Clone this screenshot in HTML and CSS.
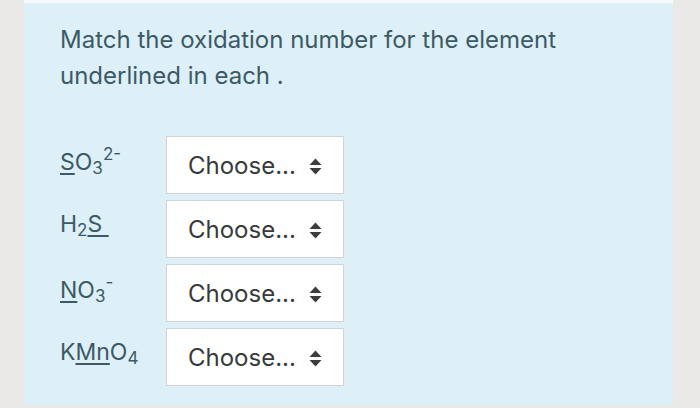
FILE: index.html
```html
<!DOCTYPE html>
<html>
<head>
<meta charset="utf-8">
<link rel="stylesheet" href="styles.css">
</head>
<body>
<div class="page">
  <div class="panel">
    <p class="question">Match the oxidation number for the element underlined in each .</p>
    <div class="rows">
      <div class="row">
        <div class="label"><u>S</u>O<sub>3</sub><sup>2-</sup></div>
        <div class="select"><span>Choose...</span><svg class="arrows" width="13" height="17" viewBox="0 0 13 17"><path d="M6.5 0.5 L12.5 7 L0.5 7 Z M6.5 16.5 L12.5 10 L0.5 10 Z" fill="#3a3d40"/></svg></div>
      </div>
      <div class="row">
        <div class="label">H<sub>2</sub><u>S&nbsp;</u></div>
        <div class="select"><span>Choose...</span><svg class="arrows" width="13" height="17" viewBox="0 0 13 17"><path d="M6.5 0.5 L12.5 7 L0.5 7 Z M6.5 16.5 L12.5 10 L0.5 10 Z" fill="#3a3d40"/></svg></div>
      </div>
      <div class="row">
        <div class="label"><u>N</u>O<sub>3</sub><sup>-</sup></div>
        <div class="select"><span>Choose...</span><svg class="arrows" width="13" height="17" viewBox="0 0 13 17"><path d="M6.5 0.5 L12.5 7 L0.5 7 Z M6.5 16.5 L12.5 10 L0.5 10 Z" fill="#3a3d40"/></svg></div>
      </div>
      <div class="row">
        <div class="label">K<u>Mn</u>O<sub>4</sub></div>
        <div class="select"><span>Choose...</span><svg class="arrows" width="13" height="17" viewBox="0 0 13 17"><path d="M6.5 0.5 L12.5 7 L0.5 7 Z M6.5 16.5 L12.5 10 L0.5 10 Z" fill="#3a3d40"/></svg></div>
      </div>
    </div>
  </div>
</div>
</body>
</html>
```
FILE: styles.css
```css
html, body {
  margin: 0;
  padding: 0;
}
body {
  background: #ebe9e7;
  font-family: Inter, "Liberation Sans", sans-serif;
}
.page {
  width: 700px;
  height: 408px;
  overflow: hidden;
  display: flex;
}
.panel {
  margin-left: 24px;
  width: 649px;
  height: 405px;
  background: #def0f7;
  border-top: 3px solid #f5fafc;
  padding: 19px 0 0 36px;
  box-sizing: border-box;
}
.question {
  margin: 0;
  width: 560px;
  font-size: 24px;
  line-height: 36px;
  color: #3c5a66;
}
.rows {
  margin-top: 42px;
  display: flex;
  flex-direction: column;
  gap: 6px;
}
.row {
  display: flex;
  align-items: center;
}
.label {
  width: 106px;
  font-size: 23px;
  color: #3c5a66;
  margin-top: -8px;
}
.label u {
  text-decoration-thickness: 1.5px;
  text-underline-offset: 3px;
}
.label sub {
  font-size: 17px;
  vertical-align: -4px;
}
.label sup {
  font-size: 17px;
  vertical-align: 10px;
}
.select {
  width: 178px;
  height: 58px;
  box-sizing: border-box;
  background: #fff;
  border: 1px solid #cdd5d9;
  display: flex;
  align-items: center;
  padding-left: 21px;
  color: #373a3c;
  font-size: 24px;
}
.arrows {
  margin-left: 13px;
  margin-top: 2px;
}
```
